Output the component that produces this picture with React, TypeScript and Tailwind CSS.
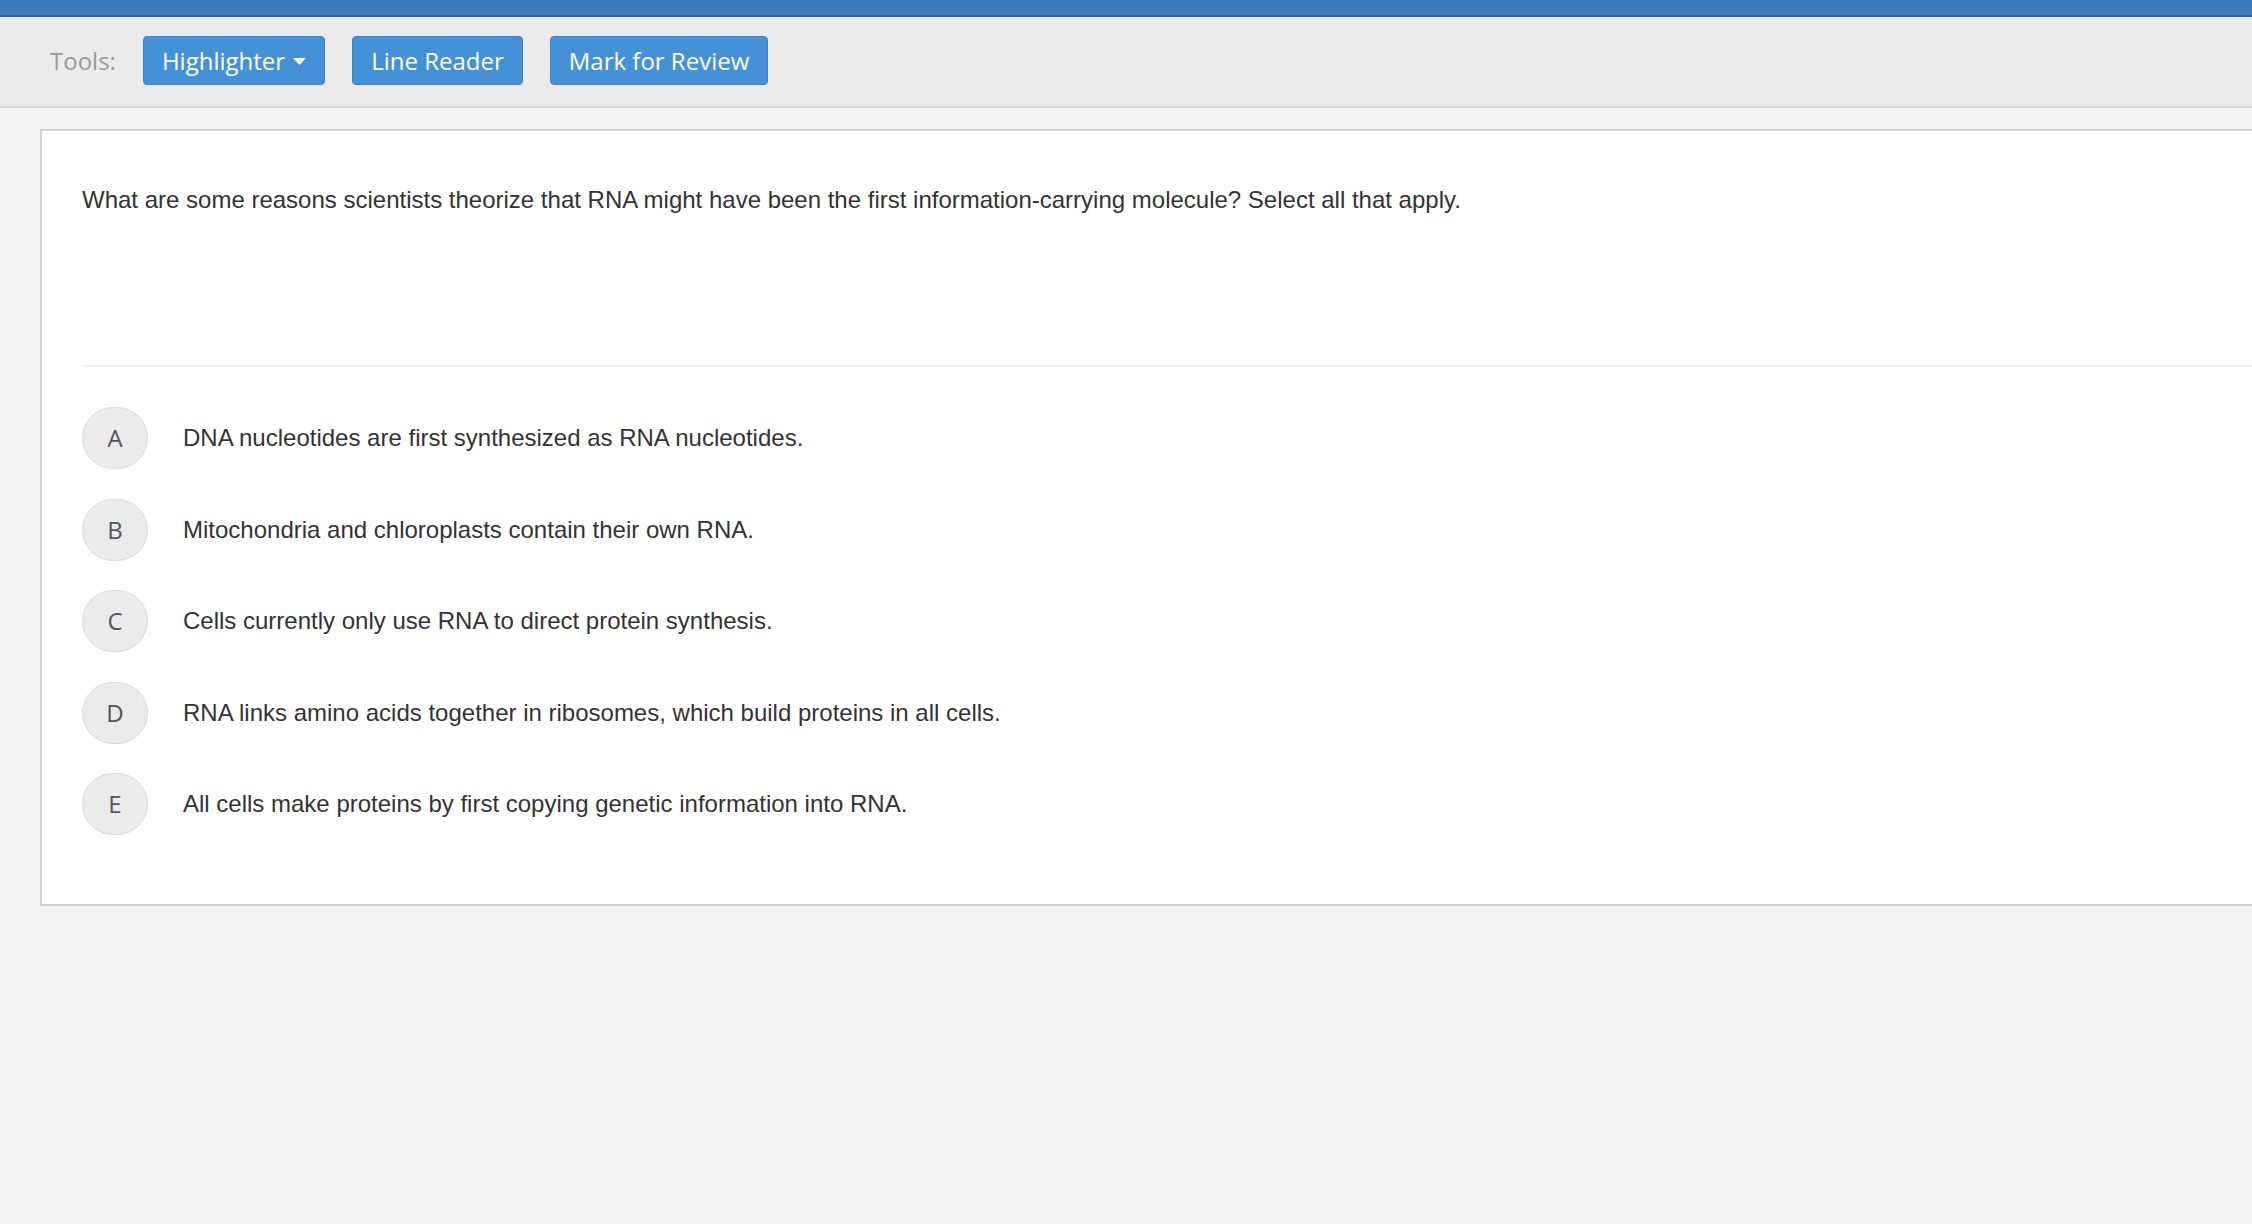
import React from 'react';

const choices = [
  { key: 'A', text: 'DNA nucleotides are first synthesized as RNA nucleotides.' },
  { key: 'B', text: 'Mitochondria and chloroplasts contain their own RNA.' },
  { key: 'C', text: 'Cells currently only use RNA to direct protein synthesis.' },
  { key: 'D', text: 'RNA links amino acids together in ribosomes, which build proteins in all cells.' },
  { key: 'E', text: 'All cells make proteins by first copying genetic information into RNA.' },
];

function ToolButton({ children }: { children: React.ReactNode }) {
  return (
    <button className="flex h-[49px] items-center rounded-[4px] border border-[#3b82cc] bg-[#4591d8] px-[18px] text-[24px] text-white">
      {children}
    </button>
  );
}

export default function App() {
  return (
    <div className="min-h-screen bg-[#f3f3f3] font-['Open_Sans',sans-serif]">
      <div className="h-[17px] border-b-2 border-[#2e5fa7] bg-[#3a7db6]" />

      <div className="flex h-[91px] items-center gap-[27px] border-b-2 border-[#d6d6d6] bg-[#ebebeb] pb-[2px] pl-[50px]">
        <span className="text-[24px] text-[#9a9a9a]">Tools:</span>
        <ToolButton>
          Highlighter
          <svg className="ml-[8px] mt-[2px]" width="13" height="7" viewBox="0 0 13 7">
            <path d="M0 0h13L6.5 7z" fill="#fff" />
          </svg>
        </ToolButton>
        <ToolButton>Line Reader</ToolButton>
        <ToolButton>Mark for Review</ToolButton>
      </div>

      <div className="pl-[40px] pt-[21px]">
        <div className="border-y-2 border-l-2 border-[#d2d2d2] bg-white font-['Liberation_Sans',Arial,sans-serif] text-[#333]">
          <div className="h-[234px] pl-[40px] pt-[53px] text-[24px] leading-[32px]">
            What are some reasons scientists theorize that RNA might have been the first information-carrying molecule? Select all that apply.
          </div>
          <div className="ml-[40px] h-[2px] bg-[#f0f0f0]" />
          <div className="flex flex-col gap-[29.5px] pb-[69px] pl-[40px] pt-[40px]">
            {choices.map((c) => (
              <div key={c.key} className="flex items-center">
                <div className="flex h-[62px] w-[66px] shrink-0 items-center justify-center rounded-full border border-[#dadada] bg-[#ebebeb] font-['Open_Sans',sans-serif] text-[24px] text-[#555]">
                  {c.key}
                </div>
                <span className="ml-[35px] text-[24px] leading-[32px]">{c.text}</span>
              </div>
            ))}
          </div>
        </div>
      </div>
    </div>
  );
}
